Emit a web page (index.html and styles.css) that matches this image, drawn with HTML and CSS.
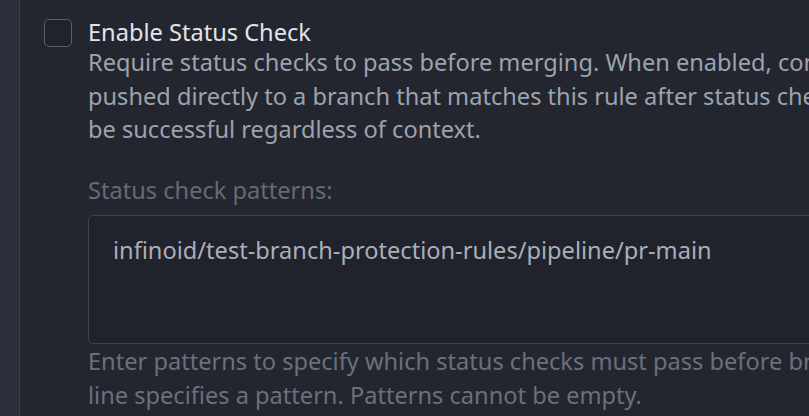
FILE: index.html
```
<!DOCTYPE html>
<html lang="en">
<head>
<meta charset="utf-8">
<title>Branch protection</title>
<link rel="stylesheet" href="styles.css">
</head>
<body>
<div class="page">
  <aside class="rail"></aside>
  <main class="content">
    <div class="field">
      <span class="checkbox"></span>
      <div class="field-body">
        <div class="title">Enable Status Check</div>
        <p class="desc">Require status checks to pass before merging. When enabled, commits must first be pushed to another branch, then merged or<br>pushed directly to a branch that matches this rule after status checks have passed. If no contexts are matched, the last commit must<br>be successful regardless of context.</p>
        <label class="label">Status check patterns:</label>
        <textarea class="patterns" rows="3" readonly>infinoid/test-branch-protection-rules/pipeline/pr-main</textarea>
        <p class="help">Enter patterns to specify which status checks must pass before branches can be pushed into a branch that matches this rule. Each<br>line specifies a pattern. Patterns cannot be empty.</p>
      </div>
    </div>
  </main>
</div>
</body>
</html>
```

FILE: styles.css
```
html, body {
  margin: 0;
  padding: 0;
  height: 100%;
  overflow: hidden;
  background: #23262f;
}
.page {
  display: flex;
  height: 100%;
  font-family: "Noto Sans", "Open Sans", sans-serif;
  font-size: 23.6px;
}
.rail {
  width: 19px;
  flex: none;
  background: #2b2f3a;
  border-right: 1px solid #3c414d;
}
.content {
  flex: 1;
  padding: 19px 0 0 24px;
  min-width: 0;
  overflow: hidden;
}
.field {
  display: flex;
  gap: 16px;
  align-items: flex-start;
}
.checkbox {
  flex: none;
  width: 26px;
  height: 26px;
  border: 1.5px solid #5a5f6b;
  border-radius: 5px;
  background: #20232b;
}
.field-body {
  white-space: nowrap;
}
.title {
  color: #e0e4ec;
  line-height: 23px;
  margin-top: 2px;
}
.desc {
  margin: 2px 0 0;
  color: #9ca3af;
  line-height: 33.6px;
}
.label {
  display: block;
  margin-top: 26px;
  color: #646a76;
  line-height: 34px;
}
.patterns {
  display: block;
  box-sizing: border-box;
  margin-top: 8px;
  width: 1000px;
  height: 129px;
  padding: 17px 24px;
  font: inherit;
  line-height: 34px;
  color: #a9afba;
  background: #20232b;
  border: 1px solid #3e434e;
  border-radius: 5px;
  resize: none;
  outline: none;
}
.help {
  margin: 0;
  color: #6a707c;
  line-height: 34px;
}
```
